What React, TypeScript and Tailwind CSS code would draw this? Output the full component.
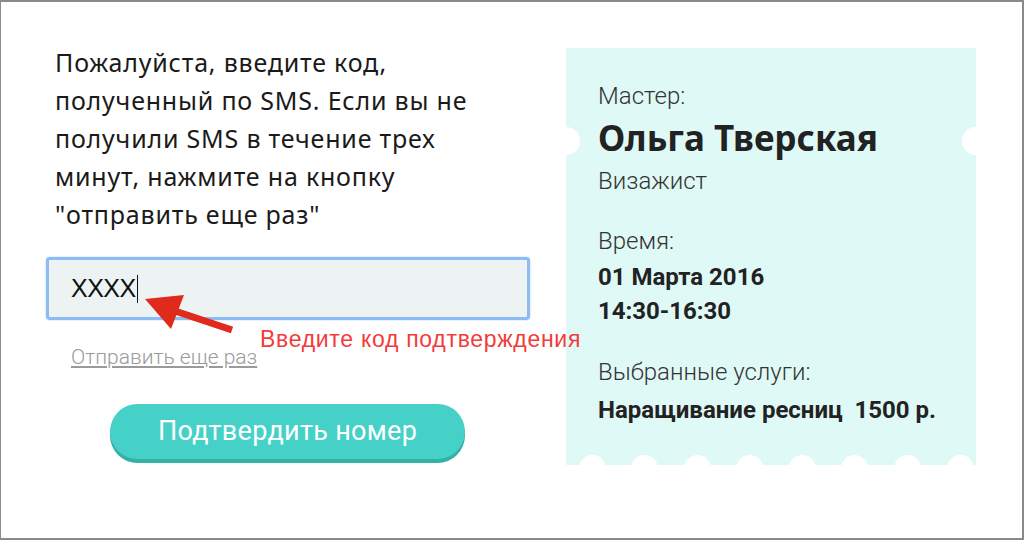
import React from 'react';

const SCALLOPS = [592, 644, 697, 749, 802, 854, 907, 960];

function Ticket() {
  return (
    <div className="relative mt-[5px] ml-[36px] w-[410px] h-[417px] overflow-hidden bg-[#dff9f6] pl-[32px] pt-[34px] text-[#222]" style={{ fontFamily: 'Roboto, sans-serif' }}>
      <div className="absolute left-[-14px] top-[79px] w-[28px] h-[28px] rounded-full bg-white" />
      <div className="absolute right-[-14px] top-[79px] w-[28px] h-[28px] rounded-full bg-white" />
      {SCALLOPS.map(x => (
        <div key={x} className="absolute bottom-[-17px] w-[27px] h-[27px] rounded-full bg-white" style={{ left: x - 566 - 13 }} />
      ))}

      <div className="text-[24px] leading-[28px] font-light text-[#333]">Мастер:</div>
      <div className="mt-[8px] text-[35px] leading-[40px] font-bold text-[#222]" style={{ fontFamily: '"Noto Sans", sans-serif' }}>Ольга Тверская</div>
      <div className="mt-[9px] text-[24px] leading-[28px] font-light text-[#333]">Визажист</div>

      <div className="mt-[32px] text-[24px] leading-[28px] font-light text-[#333]">Время:</div>
      <div className="mt-[5px] text-[24px] leading-[34px] font-bold">
        <div>01 Марта 2016</div>
        <div>14:30-16:30</div>
      </div>

      <div className="mt-[30px] text-[24px] leading-[28px] font-light text-[#333]">Выбранные услуги:</div>
      <div className="mt-[10px] text-[24px] leading-[28px] font-bold whitespace-pre">Наращивание ресниц  1500 р.</div>
    </div>
  );
}

export default function App() {
  return (
    <div className="w-[1024px] h-[540px] bg-[#8a8a8a] pl-[1px] pt-[2px] pr-[2px] pb-[2px]">
      <div className="relative flex h-full bg-white pl-[45px] pt-[41px]">
        <div className="w-[484px]">
          <p className="pl-[9px] text-[25px] leading-[38px] tracking-[0.8px] text-[#1a1a1a] whitespace-nowrap" style={{ fontFamily: '"Noto Sans", sans-serif' }}>
            Пожалуйста, введите код,<br />
            полученный по SMS. Если вы не<br />
            получили SMS в течение трех<br />
            минут, нажмите на кнопку<br />
            "отправить еще раз"
          </p>

          <div className="mt-[24px] h-[63px] rounded-[4px] border-[3px] border-[#8cbcf5] bg-[#edf3f3] flex items-center pl-[22px] shadow-[0_0_2px_#a9cdf8]">
            <span className="text-[25px] text-[#111] tracking-[-0.5px]" style={{ fontFamily: '"Liberation Sans", Arial, sans-serif' }}>XXXX</span>
            <span className="ml-[1px] w-[1px] h-[28px] bg-[#111]" />
          </div>

          <div className="mt-[25px] pl-[25px]">
            <a className="text-[21px] leading-[24px] font-light text-[#9a9a9a] underline" style={{ fontFamily: 'Roboto, sans-serif' }}>Отправить еще раз</a>
          </div>

          <button className="mt-[34px] ml-[64px] w-[355px] h-[55px] rounded-full bg-[#45d1c8] shadow-[0_4px_0_#33b1a7] text-white text-[27px] tracking-[0.3px]" style={{ fontFamily: 'Roboto, sans-serif' }}>
            Подтвердить номер
          </button>
        </div>

        <Ticket />

        <svg className="absolute left-[143px] top-[290px]" width="100" height="45" viewBox="0 0 100 45">
          <line x1="28" y1="18" x2="88" y2="38" stroke="#df2a1c" strokeWidth="7" />
          <polygon points="1,7 40,3 27,37" fill="#df2a1c" />
        </svg>
        <div className="absolute left-[259px] top-[324px] text-[23px] leading-[26px] tracking-[0.7px] text-[#f23b3b] whitespace-nowrap" style={{ fontFamily: '"Liberation Sans", Arial, sans-serif' }}>
          Введите код подтверждения
        </div>
      </div>
    </div>
  );
}
